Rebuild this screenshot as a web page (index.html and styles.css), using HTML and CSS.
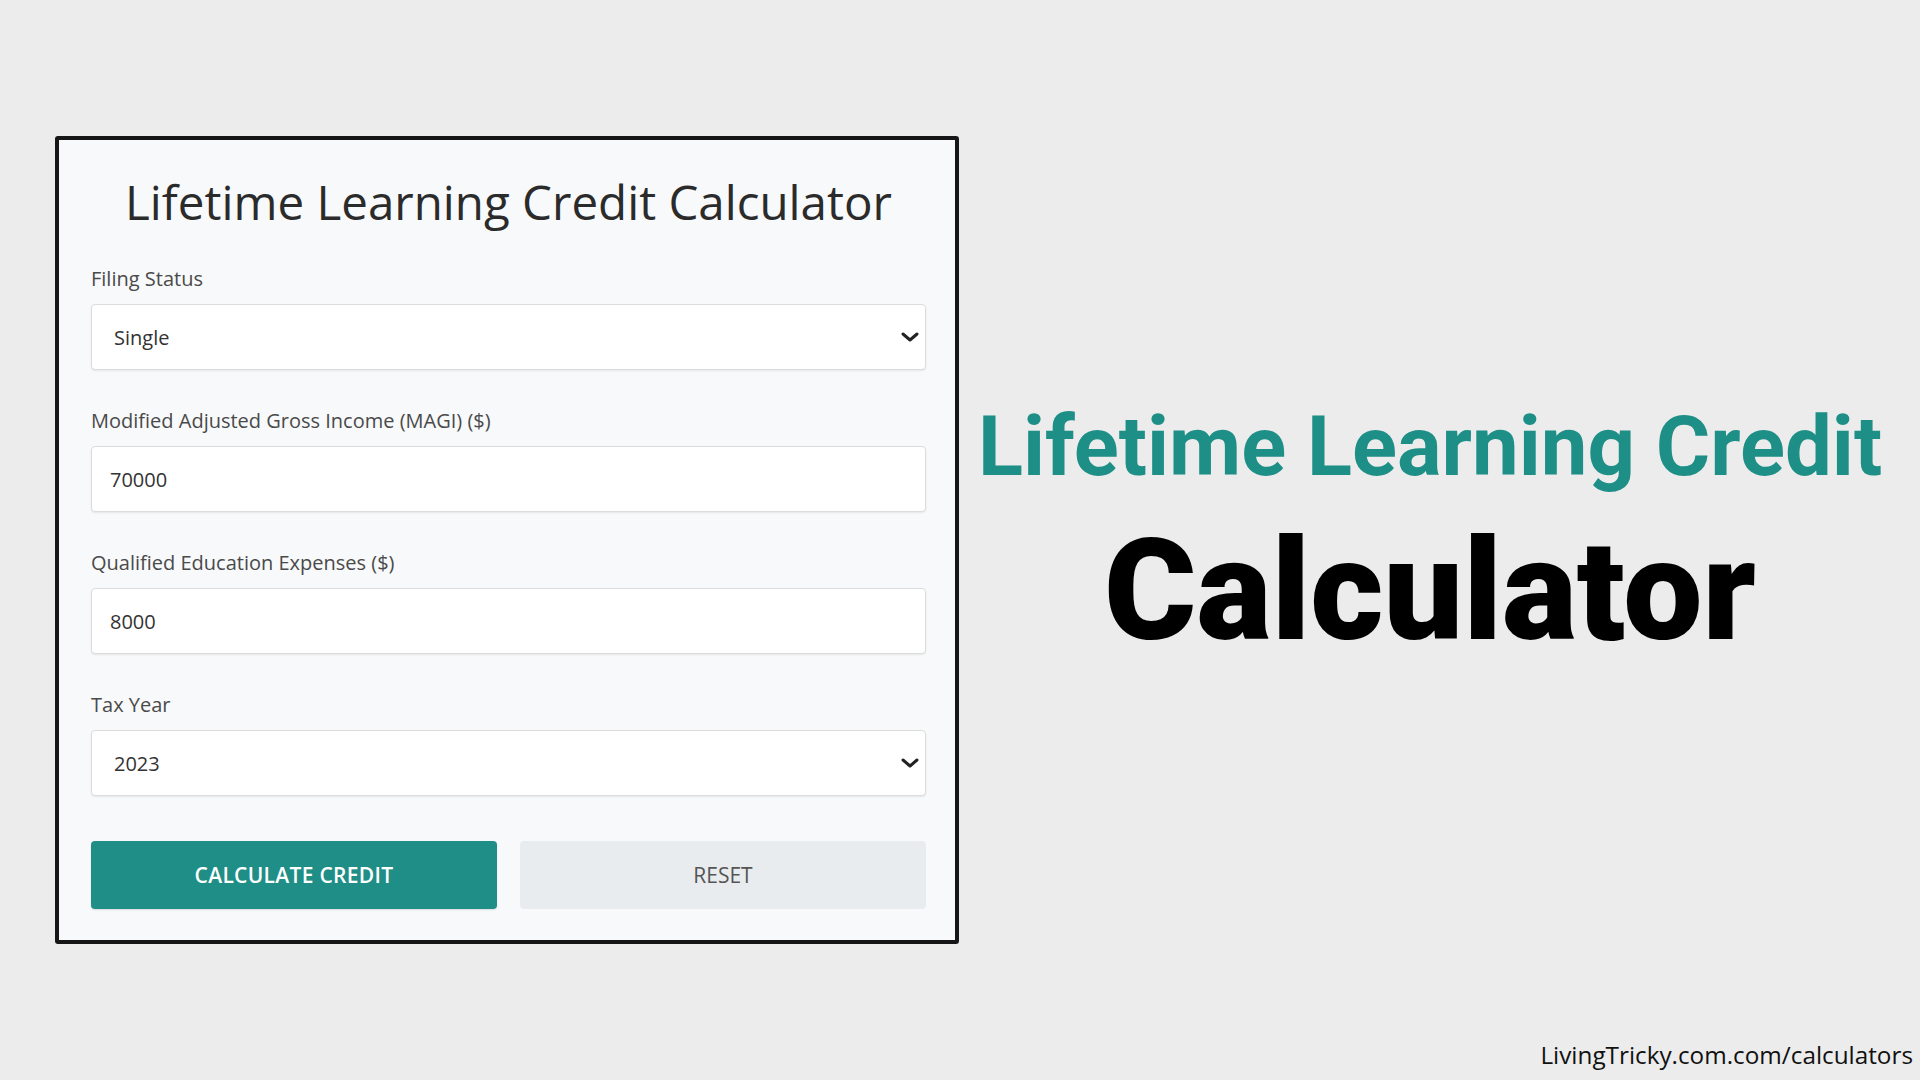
FILE: index.html
```html
<!DOCTYPE html>
<html lang="en">
<head>
<meta charset="utf-8">
<title>Lifetime Learning Credit Calculator</title>
<link rel="stylesheet" href="styles.css">
</head>
<body>
<div class="page">
  <main class="main">
    <section class="card">
      <h1 class="card-title">Lifetime Learning Credit Calculator</h1>
      <div class="group">
        <label class="label" for="status">Filing Status</label>
        <div class="select-wrap">
          <select id="status" class="field select">
            <option>Single</option>
            <option>Married Filing Jointly</option>
            <option>Head of Household</option>
          </select>
          <svg class="chevron" viewBox="0 0 18 10" width="18" height="10" aria-hidden="true"><path d="M2 2 L9 8 L16 2" fill="none" stroke="#222" stroke-width="3" stroke-linecap="round" stroke-linejoin="round"/></svg>
        </div>
      </div>
      <div class="group">
        <label class="label" for="magi">Modified Adjusted Gross Income (MAGI) ($)</label>
        <input id="magi" class="field input" type="text" value="70000">
      </div>
      <div class="group">
        <label class="label" for="exp">Qualified Education Expenses ($)</label>
        <input id="exp" class="field input" type="text" value="8000">
      </div>
      <div class="group group-last">
        <label class="label" for="year">Tax Year</label>
        <div class="select-wrap">
          <select id="year" class="field select">
            <option>2023</option>
            <option>2022</option>
          </select>
          <svg class="chevron" viewBox="0 0 18 10" width="18" height="10" aria-hidden="true"><path d="M2 2 L9 8 L16 2" fill="none" stroke="#222" stroke-width="3" stroke-linecap="round" stroke-linejoin="round"/></svg>
        </div>
      </div>
      <div class="buttons">
        <button class="btn btn-primary" type="button">CALCULATE CREDIT</button>
        <button class="btn btn-secondary" type="button">RESET</button>
      </div>
    </section>
    <section class="hero">
      <div class="hero-line1">Lifetime Learning Credit</div>
      <div class="hero-line2">Calculator</div>
    </section>
  </main>
  <footer class="footer">LivingTricky.com.com/calculators</footer>
</div>
</body>
</html>
```
FILE: styles.css
```css
* { box-sizing: border-box; }
html, body { margin: 0; padding: 0; }
body {
  background: #ececec;
  font-family: "Open Sans", "Noto Sans", sans-serif;
}
.page {
  width: 1920px;
  height: 1080px;
  display: flex;
  flex-direction: column;
  overflow: hidden;
}
.main {
  flex: 1;
  display: flex;
  align-items: flex-start;
  padding: 136px 0 0 55px;
}
.card {
  width: 904px;
  height: 808px;
  background: #f8f9fa;
  border: 4px solid #161616;
  border-radius: 3px;
  padding: 30px 29px 31px 32px;
}
.card-title {
  margin: 0 0 33px;
  text-align: center;
  font-size: 47.5px;
  line-height: 64px;
  font-weight: 500;
  color: #2b2b2b;
}
.group { margin-bottom: 39px; }
.group-last { margin-bottom: 45px; }
.label {
  display: block;
  font-size: 20px;
  line-height: 24px;
  color: #4a4a4a;
  margin-bottom: 13px;
}
.field {
  display: block;
  width: 100%;
  height: 66px;
  background: #fff;
  border: 1px solid #dcdcdc;
  border-radius: 4px;
  box-shadow: 0 1px 2px rgba(0,0,0,0.08);
  font-family: "Open Sans", "Noto Sans", sans-serif;
  font-size: 20px;
  color: #333;
  outline: none;
}
.input { padding: 0 18px; }
.select {
  appearance: none;
  -webkit-appearance: none;
  padding: 0 22px;
}
.select-wrap { position: relative; }
.chevron {
  position: absolute;
  right: 7px;
  top: 28px;
  pointer-events: none;
}
.buttons {
  display: flex;
  gap: 23px;
}
.btn {
  flex: 1;
  height: 68px;
  border: none;
  border-radius: 4px;
  font-family: "Open Sans", "Noto Sans", sans-serif;
  font-size: 21px;
  cursor: pointer;
}
.btn-primary {
  background: #1e8e86;
  color: #fff;
  font-weight: 600;
  letter-spacing: 0.3px;
  box-shadow: 0 1px 2px rgba(0,0,0,0.12);
}
.btn-secondary {
  background: #e9ecef;
  color: #555;
  font-weight: 500;
}
.hero {
  flex: 1;
  align-self: stretch;
  display: flex;
  flex-direction: column;
  align-items: center;
  justify-content: center;
  padding: 0 19px 0 0;
  margin-top: -136px;
  padding-top: 33px;
  font-family: Roboto, "Noto Sans", sans-serif;
}
.hero-line1 {
  font-size: 83.3px;
  line-height: 100px;
  font-weight: 700;
  color: #1e8f87;
  white-space: nowrap;
}
.hero-line2 {
  margin-top: 19px;
  font-size: 141px;
  line-height: 150px;
  font-weight: 900;
  color: #000;
  white-space: nowrap;
}
.footer {
  height: 50px;
  line-height: 50px;
  text-align: right;
  padding-right: 7px;
  font-size: 24.3px;
  color: #111;
}
```
